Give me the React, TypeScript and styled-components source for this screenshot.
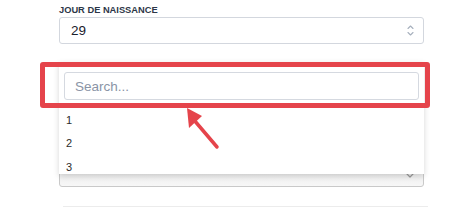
import React from "react";
import styled, { createGlobalStyle } from "styled-components";

const Global = createGlobalStyle`
  html, body { margin: 0; padding: 0; background: #ffffff; }
  body { font-family: "Liberation Sans", Arial, Helvetica, sans-serif; }
  * { box-sizing: border-box; }
`;

const Page = styled.div`
  position: relative;
  width: 474px;
  height: 210px;
  overflow: hidden;
  padding: 5px 50px 0 59px;
`;

const Label = styled.div`
  font-size: 9.3px;
  line-height: 11px;
  font-weight: 700;
  color: #2d3748;
`;

const SelectBox = styled.div<{ $closed?: boolean }>`
  display: flex;
  align-items: center;
  justify-content: space-between;
  height: 27px;
  margin-top: ${(p) => (p.$closed ? "116px" : "1px")};
  padding: 0 9px 0 11px;
  border: 1px solid ${(p) => (p.$closed ? "#c9c9c9" : "#d3d7de")};
  border-radius: 3px;
  background: ${(p) =>
    p.$closed ? "linear-gradient(#e6e6e6, #f7f7f7)" : "#ffffff"};
  font-size: 13.5px;
  color: #1a202c;
`;

const Divider = styled.div`
  height: 1px;
  margin: 19px -4px 0 4px;
  background: #ececec;
`;

const Dropdown = styled.div`
  position: absolute;
  left: 59px;
  top: 62px;
  width: 365px;
  height: 112px;
  overflow: hidden;
  background: #ffffff;
  box-shadow: 0 2px 6px rgba(0, 0, 0, 0.16);
  padding: 10px 5px 0 5px;
  display: flex;
  flex-direction: column;
`;

const SearchInput = styled.div`
  flex-shrink: 0;
  height: 28px;
  border: 1px solid #d5d9e0;
  border-radius: 3px;
  display: flex;
  align-items: center;
  padding-left: 10px;
  font-size: 13.5px;
  color: #8a94a6;
`;

const Option = styled.div`
  flex-shrink: 0;
  height: 23.5px;
  display: flex;
  align-items: center;
  padding-left: 2px;
  font-size: 11px;
  color: #2b2b2b;
  &:nth-of-type(2) { margin-top: 8px; }
`;

const Highlight = styled.div`
  position: absolute;
  left: 40px;
  top: 62px;
  width: 390px;
  height: 46px;
  border: 5px solid #e5444b;
  border-radius: 3px;
`;

const ArrowSvg = styled.svg`
  position: absolute;
  left: 0;
  top: 0;
  pointer-events: none;
`;

const UpDown = () => (
  <svg width="7" height="11" viewBox="0 0 7 11" fill="none" stroke="#a7b0bd" strokeWidth="1.1" strokeLinecap="round" strokeLinejoin="round">
    <path d="M1 3.5 L3.5 1 L6 3.5" />
    <path d="M1 7.5 L3.5 10 L6 7.5" />
  </svg>
);

const ChevronDown = () => (
  <svg width="8" height="5" viewBox="0 0 8 5" fill="none" stroke="#9a9a9a" strokeWidth="1.2" strokeLinecap="round" strokeLinejoin="round">
    <path d="M1 1 L4 4 L7 1" />
  </svg>
);

const ClosedChevron = styled.div`
  align-self: flex-end;
  margin-bottom: 8px;
  display: flex;
`;

export default function App() {
  return (
    <>
      <Global />
      <Page>
        <Label>JOUR DE NAISSANCE</Label>
        <SelectBox>
          <span>29</span>
          <UpDown />
        </SelectBox>
        <SelectBox $closed>
          <span />
          <ClosedChevron>
            <ChevronDown />
          </ClosedChevron>
        </SelectBox>
        <Divider />

        <Dropdown>
          <SearchInput>Search...</SearchInput>
          <Option>1</Option>
          <Option>2</Option>
          <Option>3</Option>
        </Dropdown>

        <Highlight />
        <ArrowSvg width="474" height="210" viewBox="0 0 474 210">
          <polygon points="187,108 202,116 189,128" fill="#e5444b" />
          <line x1="194" y1="120" x2="217" y2="147" stroke="#e5444b" strokeWidth="3.5" strokeLinecap="round" />
        </ArrowSvg>
      </Page>
    </>
  );
}
